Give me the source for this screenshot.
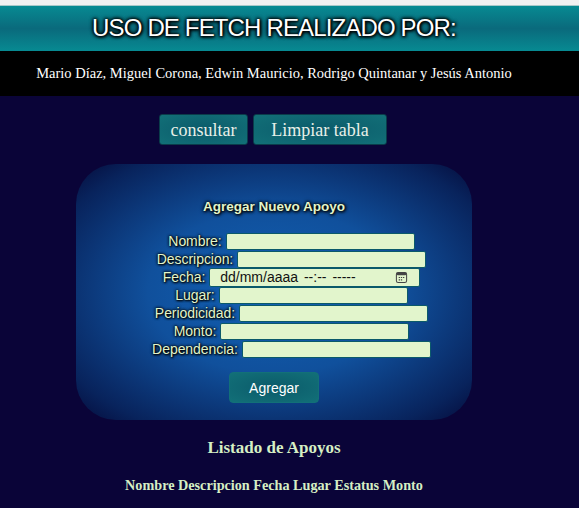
<div class="page">
  <header class="banner">
    <h1>USO DE FETCH REALIZADO POR:</h1>
  </header>
  <div class="authors">
    <p>Mario Díaz, Miguel Corona, Edwin Mauricio, Rodrigo Quintanar y Jesús Antonio</p>
  </div>
  <main class="main">
    <div class="actions">
      <button class="btn small">consultar</button>
      <button class="btn">Limpiar tabla</button>
    </div>
    <form class="card" onsubmit={(e) => e.preventDefault()}>
      <h3>Agregar Nuevo Apoyo</h3>
      <div class="rows">
        <div class="row"><label for="a">Nombre:</label> <input id="a" type="text" /></div>
        <div class="row"><label for="b">Descripcion:</label> <input id="b" type="text" /></div>
        <div class="row">
          <label for="c">Fecha:</label>
          <span class="date" id="c">
            <span class="mask">dd/mm/aaaa --:-- -----</span>
            <svg viewBox="0 0 14 14" width="13" height="13" aria-hidden="true">
              <rect x="1.5" y="1.5" width="11" height="11" rx="2" fill="none" stroke="#444" stroke-width="1.1" />
              <rect x="1.5" y="1.5" width="11" height="3" rx="1.5" fill="#444" />
              <path d="M4 7h1.4M6.3 7h1.4M8.6 7h1.4M4 9.6h1.4M6.3 9.6h1.4" stroke="#444" stroke-width="1.2" fill="none" />
            </svg>
          </span>
        </div>
        <div class="row"><label for="d">Lugar:</label> <input id="d" type="text" /></div>
        <div class="row"><label for="e">Periodicidad:</label> <input id="e" type="text" /></div>
        <div class="row"><label for="f">Monto:</label> <input id="f" type="text" /></div>
        <div class="row"><label for="g">Dependencia:</label> <input id="g" type="text" /></div>
      </div>
      <button class="btn submit" type="submit">Agregar</button>
    </form>
    <h2>Listado de Apoyos</h2>
    <div class="cols">Nombre Descripcion Fecha Lugar Estatus Monto</div>
  </main>
</div>

<style>
  :global(html), :global(body) {
    margin: 0;
    height: 508px;
    overflow: hidden;
    background: #0a0438;
  }
  .page {
    height: 508px;
    overflow: hidden;
    background: #0a0438;
    border-top: 5px solid #f1f1f1;
    box-sizing: border-box;
  }
  .banner {
    height: 46px;
    box-sizing: border-box;
    padding-right: 31px;
    border-top: 1px solid #a9c9c9;
    background: linear-gradient(180deg, #078a92 0%, #0a6a7c 50%, #078a92 100%);
    text-align: center;
  }
  h1 {
    margin: 0;
    padding-top: 8px;
    font: 400 24px/28px "Liberation Sans", Arial, sans-serif;
    letter-spacing: -0.85px;
    color: #fff;
    text-shadow: 0 0 3px #000, 0 0 4px #000, 0 0 4px #000, 1px 1px 3px #000;
  }
  .authors {
    height: 45px;
    background: #000;
    padding-right: 31px;
    text-align: center;
  }
  .authors p {
    margin: 0;
    padding-top: 13px;
    font: 400 14.5px/18px "Liberation Serif", "Times New Roman", serif;
    color: #fff;
  }
  .main {
    padding-right: 31px;
    text-align: center;
  }
  .actions {
    display: flex;
    justify-content: center;
    gap: 5px;
    padding: 18px 2px 0 0;
  }
  .btn {
    height: 31px;
    width: 134px;
    padding: 0;
    border: 1px solid #0a3c4a;
    border-radius: 3px;
    background: radial-gradient(ellipse at center, #0b5a6a 0%, #127078 100%);
    color: #e8f0e8;
    font: 400 18px/1 "Liberation Serif", "Times New Roman", serif;
  }
  .btn.small {
    width: 89px;
  }
  .card {
    box-sizing: border-box;
    width: 396px;
    height: 256px;
    margin: 19px auto 0;
    padding-top: 34px;
    border-radius: 40px;
    background: radial-gradient(ellipse at center, #1261b4 0%, #10509c 45%, #08235c 85%, #050c3c 100%);
  }
  h3 {
    margin: 0;
    font: 700 13.5px/17px "Liberation Sans", Arial, sans-serif;
    color: #e2f5cc;
    text-shadow: 0 0 3px #000, 0 0 4px #000, 1px 1px 3px #000;
  }
  .rows {
    margin-top: 17px;
    padding-left: 35px;
  }
  .row {
    height: 18px;
    display: flex;
    justify-content: center;
    align-items: center;
    gap: 4px;
  }
  label {
    font: 400 14px/18px "Liberation Sans", Arial, sans-serif;
    letter-spacing: -0.05px;
    color: #e2f5cc;
    text-shadow: 0 0 3px #000, 0 0 3px #000, 1px 1px 2px #000;
  }
  input {
    box-sizing: border-box;
    width: 189px;
    height: 17px;
    padding: 0;
    border: 1px solid #0b5a6a;
    border-radius: 2px;
    background: #e2f5cc;
  }
  .date {
    box-sizing: border-box;
    width: 211px;
    height: 19px;
    display: flex;
    align-items: center;
    justify-content: space-between;
    padding: 0 11px 0 10px;
    border: 1px solid #0b5a6a;
    border-radius: 2px;
    background: #e2f5cc;
    font: 400 14px/17px "Liberation Sans", Arial, sans-serif;
    color: #111;
  }
  .mask {
    word-spacing: 2px;
    white-space: nowrap;
  }
  .submit {
    display: block;
    width: 90px;
    margin: 14px auto 0;
    font: 400 14px/1 "Liberation Sans", Arial, sans-serif;
    color: #fff;
    border-color: #127078;
    border-radius: 4px;
  }
  h2 {
    margin: 0;
    padding-top: 18px;
    font: 700 17px/19px "Liberation Serif", "Times New Roman", serif;
    color: #d6efc4;
  }
  .cols {
    padding-top: 20px;
    font: 700 14.2px/17px "Liberation Serif", "Times New Roman", serif;
    color: #d6efc4;
  }
</style>
